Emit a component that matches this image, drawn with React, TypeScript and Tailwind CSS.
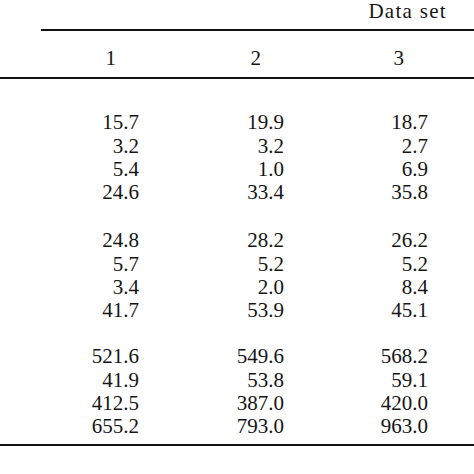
const groups: string[][][] = [
  [
    ['15.7', '19.9', '18.7'],
    ['3.2', '3.2', '2.7'],
    ['5.4', '1.0', '6.9'],
    ['24.6', '33.4', '35.8'],
  ],
  [
    ['24.8', '28.2', '26.2'],
    ['5.7', '5.2', '5.2'],
    ['3.4', '2.0', '8.4'],
    ['41.7', '53.9', '45.1'],
  ],
  [
    ['521.6', '549.6', '568.2'],
    ['41.9', '53.8', '59.1'],
    ['412.5', '387.0', '420.0'],
    ['655.2', '793.0', '963.0'],
  ],
];

const groupMargins = ['mt-[32.8px]', 'mt-[24.8px]', 'mt-[22.8px]'];

// three data columns, right edges at 139 / 284 / 428
const cols = 'grid grid-cols-[139px_145px_144px]';

export default function App() {
  return (
    <div
      className="w-[474px] h-[474px] bg-white text-[#151515] text-[21px] overflow-hidden"
      style={{ fontFamily: '"Liberation Serif", "Times New Roman", serif' }}
    >
      {/* caption */}
      <div className="h-[29px] flex justify-end items-start pr-[27px]">
        <span className="leading-[23.4px] tracking-[1.3px]">Data set</span>
      </div>
      <div className="ml-[41px] h-[1.5px] bg-[#111]" />

      {/* header row */}
      <div className={`${cols} h-[46.5px] pt-[8px] leading-[38px]`}>
        <div className="text-right pr-[23px]">1</div>
        <div className="text-right pr-[23px]">2</div>
        <div className="text-right pr-[24px]">3</div>
      </div>
      <div className="h-[1.5px] bg-[#111]" />

      {/* data groups */}
      {groups.map((rows, g) => (
        <div key={g} className={groupMargins[g]}>
          {rows.map((row, r) => (
            <div key={r} className={`${cols} leading-[23.3px]`}>
              {row.map((v, c) => (
                <div key={c} className="text-right">
                  {v}
                </div>
              ))}
            </div>
          ))}
        </div>
      ))}

      <div className="mt-[5.5px] h-[2px] bg-[#111]" />
    </div>
  );
}
